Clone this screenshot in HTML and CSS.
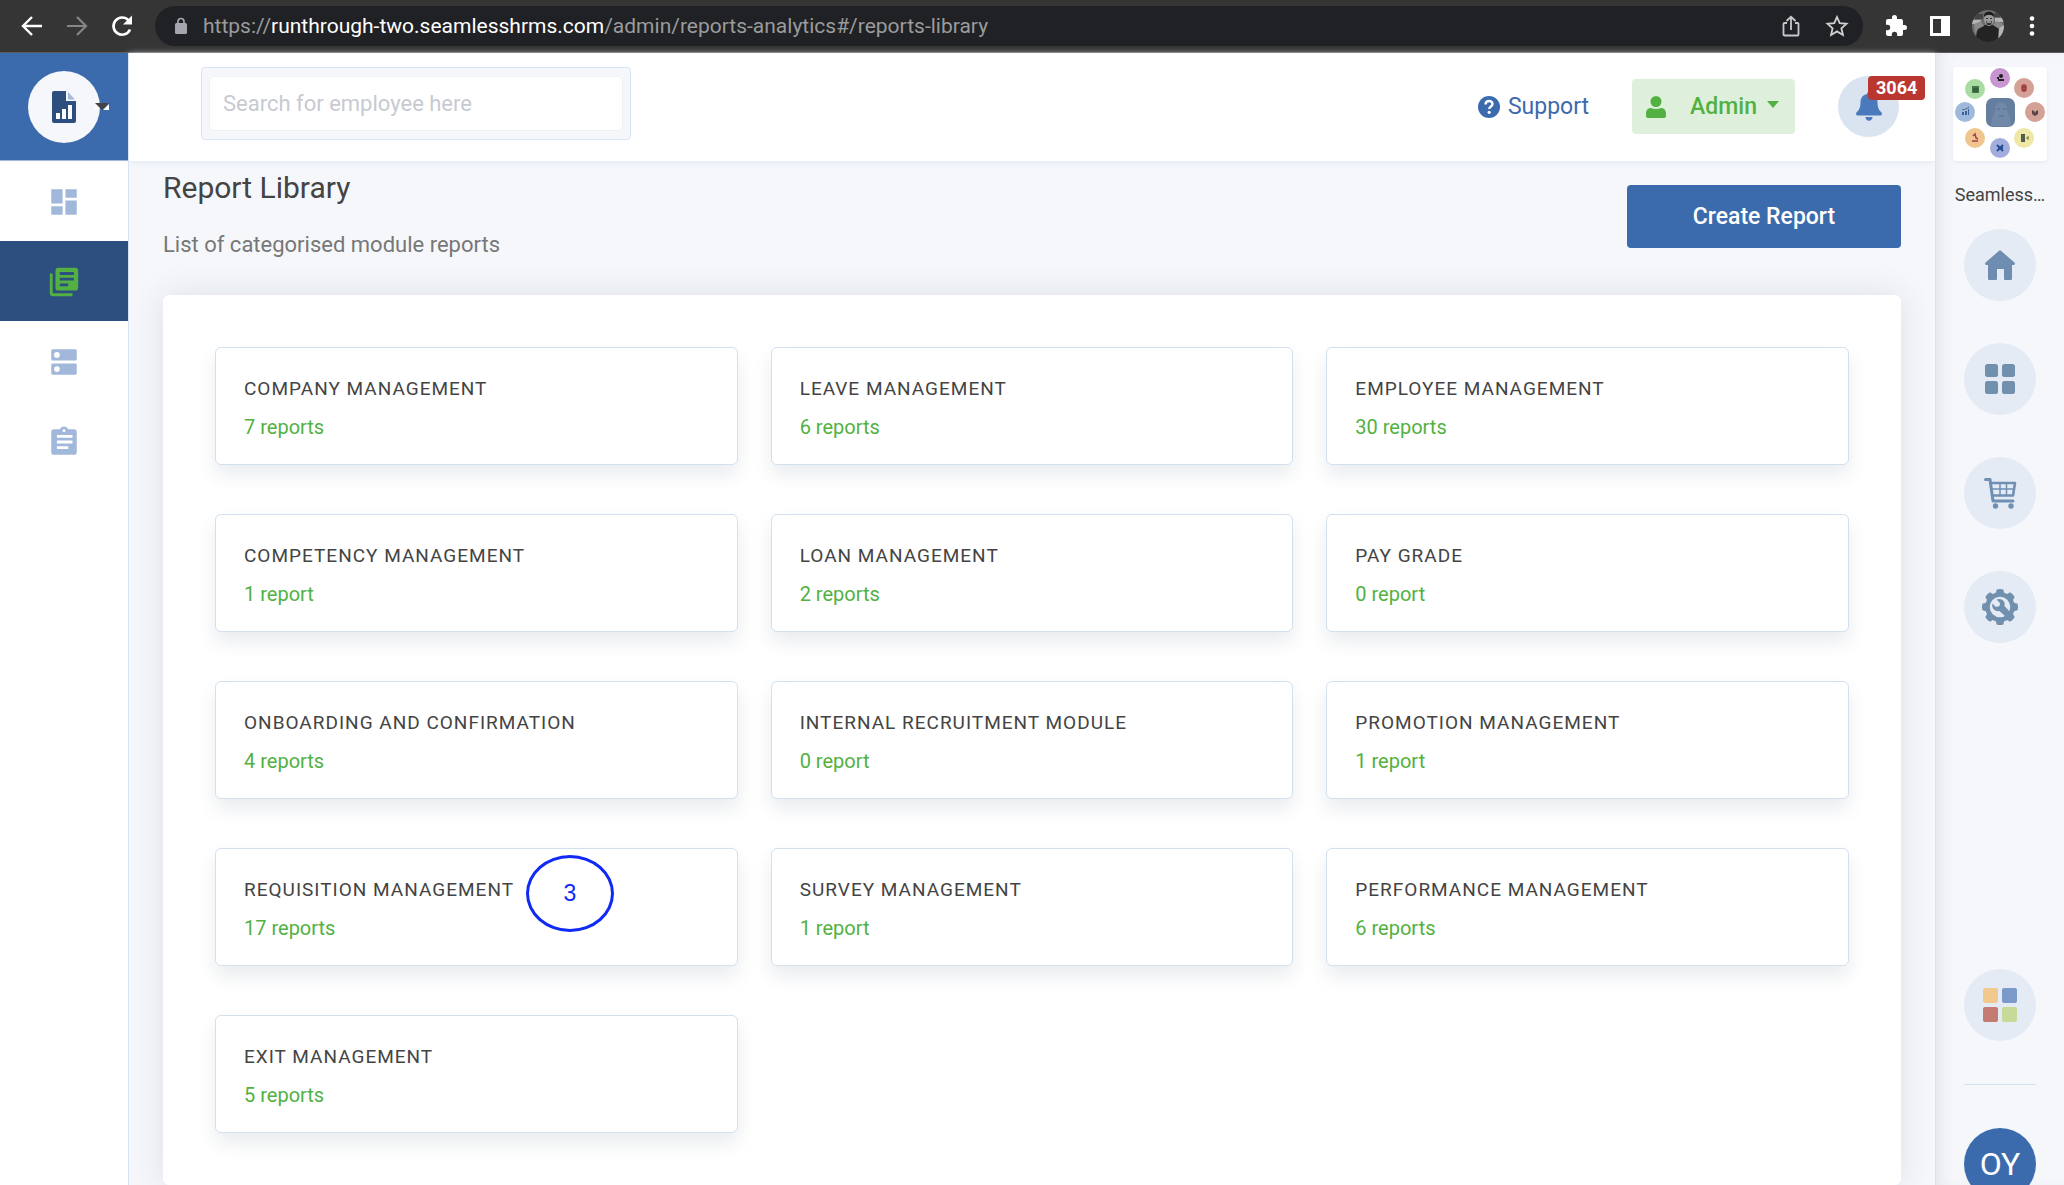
FILE: index.html
```html
<!DOCTYPE html>
<html lang="en">

	<head>
		<meta charset="utf-8">
		<title>Report Library</title>
		<link rel="stylesheet" href="styles.css">
	</head>

	<body>
		<!-- browser toolbar -->
		<div class="browser">
			<button class="nav-btn" aria-label="Back">
				<svg width="24" height="24" viewBox="0 0 24 24" fill="none" stroke="#fff" stroke-width="2.4"><path d="M22 12H4M12 3l-9 9 9 9"/></svg>
			</button>
			<button class="nav-btn" aria-label="Forward">
				<svg width="24" height="24" viewBox="0 0 24 24" fill="none" stroke="#868686" stroke-width="2.2"><path d="M2 12h18M12 3l9 9-9 9"/></svg>
			</button>
			<button class="nav-btn" aria-label="Reload">
				<svg width="24" height="24" viewBox="0 0 24 24"><path d="M20 15.5A8.6 8.6 0 1 1 18.500 6.300" fill="none" stroke="#fff" stroke-width="2.6"/><path d="M22 1.500v9h-9z" fill="#fff"/></svg>
			</button>
			<div class="omnibox">
				<svg width="14" height="18" viewBox="0 0 14 18"><rect x="1" y="6" width="12" height="11" rx="1.500" fill="#a3a7ad"/><path d="M4 7V4.500a3 3 0 0 1 6 0V7" fill="none" stroke="#a3a7ad" stroke-width="1.700"/></svg>
				<div class="url">https://<span>runthrough-two.seamlesshrms.com</span>/admin/reports-analytics#/reports-library</div>
				<button aria-label="Share">
					<svg width="22" height="24" viewBox="0 0 22 24" fill="none" stroke="#c6c8ca" stroke-width="1.800"><path d="M7 9H4.500a1 1 0 0 0-1 1v10.500a1 1 0 0 0 1 1h13a1 1 0 0 0 1-1V10a1 1 0 0 0-1-1H15M11 16V3M6.500 7L11 2.800 15.500 7"/></svg>
				</button>
				<button aria-label="Bookmark">
					<svg width="24" height="24" viewBox="0 0 24 24" fill="none" stroke="#d0d1d3" stroke-width="1.800"><path d="M12 3l2.700 6.200 6.800.6-5.100 4.500 1.500 6.600-5.900-3.500-5.900 3.500 1.500-6.600-5.100-4.500 6.800-.6z"/></svg>
				</button>
			</div>
			<button class="nav-btn" aria-label="Extensions">
				<svg width="24" height="24" viewBox="0 0 24 24" fill="#fff"><path d="M20.500 11H19V7a2 2 0 0 0-2-2h-4V3.500a2.500 2.500 0 0 0-5 0V5H4a2 2 0 0 0-2 2v3.800h1.500a2.700 2.700 0 0 1 0 5.400H2V20a2 2 0 0 0 2 2h3.800v-1.500a2.700 2.700 0 0 1 5.400 0V22H17a2 2 0 0 0 2-2v-4h1.500a2.500 2.500 0 0 0 0-5z"/></svg>
			</button>
			<button class="nav-btn" aria-label="Side panel">
				<svg width="22" height="22" viewBox="0 0 22 22"><path d="M1 1h20v20H1zM4 4v14h8V4z" fill="#fff" fill-rule="evenodd"/></svg>
			</button>
			<button class="nav-btn" aria-label="Profile">
				<svg width="32" height="32" viewBox="0 0 32 32">
					<clipPath id="face"><circle cx="16" cy="16" r="16"/></clipPath>
					<g clip-path="url(#face)">
						<path fill="#6b6b6b" d="M0 0h32v32H0z"/>
						<path fill="#b5b5b5" d="M0 10h9v4H0zM23 8h9v4h-9zM26 18l6-3v12l-6 2z"/>
						<path fill="#444" d="M3 4h8v5H3zM22 3h6v4h-6z"/>
						<path fill="#232323" d="M3 32l2-10 1-5 7-2h8l6 3-1 14z"/>
						<path fill="#8a8a8a" d="M2 14l7-3 3 5-6 3-3 5zM31 14l-6-3-4 4 6 4z"/>
						<ellipse cx="17" cy="9" rx="5" ry="7" fill="#9a9a9a"/>
						<path fill="#1b1b1b" d="M12 7c-1-7 11-7 10 0-3-3-7-3-10 0z"/>
						<path fill="#333" d="M14 8h2v1h-2zM18 8h2v1h-2zM14 11h6l-1 4h-4z"/>
						<path stroke="#eee" d="M15 12h4"/>
					</g>
				</svg>
			</button>
			<button class="nav-btn menu" aria-label="Menu">
				<svg width="6" height="20" viewBox="0 0 6 20" fill="#fff"><circle cx="3" cy="2.500" r="2.300"/><circle cx="3" cy="10" r="2.300"/><circle cx="3" cy="17.500" r="2.300"/></svg>
			</button>
		</div>

		<div class="app">
			<!-- left navigation -->
			<nav class="sidebar">
				<button class="module" aria-label="Switch module">
					<span class="module-icon">
						<svg width="24" height="32" viewBox="0 0 24 32"><path d="M2 0h12v10h10v20a2 2 0 0 1-2 2H2a2 2 0 0 1-2-2V2a2 2 0 0 1 2-2z" fill="#2c4f80"/><path d="M16 1l7 7.500h-7z" fill="#a3bbdd"/><path d="M4 22h4v6H4zM10 18h4v10h-4zM16 14h4v14h-4z" fill="#fff"/></svg>
					</span>
					<svg class="caret" width="14" height="8" viewBox="0 0 14 8"><path d="M0 7V3l4 4zM8 7h6V1z" fill="#fff"/><path d="M0 0h14L7 7z" fill="#444"/></svg>
				</button>
				<a href="#dashboard" aria-label="Dashboard">
					<svg width="34" height="34" viewBox="0 0 24 24"><path d="M3 13h8V3H3v10zm0 8h8v-6H3v6zm10 0h8V11h-8v10zm0-18v6h8V3h-8z"/></svg>
				</a>
				<a class="active" href="#reports-library" aria-label="Report library">
					<svg width="34" height="34" viewBox="0 0 24 24"><path d="M4 6H2v14a2 2 0 0 0 2 2h14v-2H4V6z"/><path fill-rule="evenodd" d="M8 2h12a2 2 0 0 1 2 2v12a2 2 0 0 1-2 2H8a2 2 0 0 1-2-2V4a2 2 0 0 1 2-2zm1 3v2h10V5zm0 4v2h10V9zm0 4v2h6v-2z"/></svg>
				</a>
				<a href="#storage" aria-label="Data sources">
					<svg width="34" height="34" viewBox="0 0 24 24"><path d="M20 13H4a1 1 0 0 0-1 1v6a1 1 0 0 0 1 1h16a1 1 0 0 0 1-1v-6a1 1 0 0 0-1-1zM7 19a2 2 0 1 1 0-4 2 2 0 0 1 0 4zM20 3H4a1 1 0 0 0-1 1v6a1 1 0 0 0 1 1h16a1 1 0 0 0 1-1V4a1 1 0 0 0-1-1zM7 9a2 2 0 1 1 0-4 2 2 0 0 1 0 4z"/></svg>
				</a>
				<a href="#tasks" aria-label="Assignments">
					<svg width="34" height="34" viewBox="0 0 24 24"><path d="M19 3h-4.180a3 3 0 0 0-5.640 0H5a2 2 0 0 0-2 2v14a2 2 0 0 0 2 2h14a2 2 0 0 0 2-2V5a2 2 0 0 0-2-2zm-7 0a1 1 0 1 1 0 2 1 1 0 0 1 0-2zm3 14H7v-2h8v2zm3-4H7v-2h11v2zm0-4H7V7h11v2z"/></svg>
				</a>
			</nav>

			<div class="main">
				<header class="topbar">
					<div class="search">
						<input type="text" placeholder="Search for employee here" aria-label="Search for employee">
					</div>
					<a class="support" href="#support">
						<svg width="22" height="22" viewBox="0 0 22 22"><circle cx="11" cy="11" r="11" fill="#3c6bad"/><path d="M7.500 8.500c.3-4.600 7-4.400 7-.5 0 2.500-3.300 2.500-3.300 5" fill="none" stroke="#fff" stroke-width="2.400"/><circle cx="11.200" cy="16.300" r="1.600" fill="#fff"/></svg>
						Support
					</a>
					<button class="admin">
						<svg width="20" height="22" viewBox="0 0 20 22" fill="#52b141"><circle cx="10" cy="5.500" r="5.500"/><path d="M0 18c0-4 2-6 5-6 3 1.300 7 1.300 10 0 3 0 5 2 5 6v2a2 2 0 0 1-2 2H2a2 2 0 0 1-2-2z"/></svg>
						<span>Admin</span>
						<svg width="12" height="11" viewBox="0 0 12 11" fill="#52b141"><path d="M0 0h12L6 7z"/></svg>
					</button>
					<button class="bell" aria-label="Notifications">
						<svg width="26" height="29" viewBox="0 0 26 29" fill="#4a7abb"><path d="M13 0c1.200 0 2 .8 2 2 4 .9 6.500 4 6.500 8 0 6 1.500 8 4 10.500.9 1.200.3 3-1.500 3H2c-1.800 0-2.400-1.800-1.500-3C3 18 4.500 16 4.500 10c0-4 2.500-7.100 6.500-8 0-1.200.8-2 2-2zM9.500 25h7c0 5-7 5-7 0z"/></svg>
						<span class="badge">3064</span>
					</button>
				</header>

				<main class="content">
					<div class="page-head">
						<div>
							<h1>Report Library</h1>
							<p>List of categorised module reports</p>
						</div>
						<button class="create">Create Report</button>
					</div>
					<div class="panel">
						<a class="card" href="#company"><h2>COMPANY MANAGEMENT</h2><p>7 reports</p></a>
						<a class="card" href="#leave"><h2>LEAVE MANAGEMENT</h2><p>6 reports</p></a>
						<a class="card" href="#employee"><h2>EMPLOYEE MANAGEMENT</h2><p>30 reports</p></a>
						<a class="card" href="#competency"><h2>COMPETENCY MANAGEMENT</h2><p>1 report</p></a>
						<a class="card" href="#loan"><h2>LOAN MANAGEMENT</h2><p>2 reports</p></a>
						<a class="card" href="#paygrade"><h2>PAY GRADE</h2><p>0 report</p></a>
						<a class="card" href="#onboarding"><h2>ONBOARDING AND CONFIRMATION</h2><p>4 reports</p></a>
						<a class="card" href="#recruitment"><h2>INTERNAL RECRUITMENT MODULE</h2><p>0 report</p></a>
						<a class="card" href="#promotion"><h2>PROMOTION MANAGEMENT</h2><p>1 report</p></a>
						<a class="card" href="#requisition"><h2>REQUISITION MANAGEMENT</h2><p>17 reports</p><span class="marker">3</span></a>
						<a class="card" href="#survey"><h2>SURVEY MANAGEMENT</h2><p>1 report</p></a>
						<a class="card" href="#performance"><h2>PERFORMANCE MANAGEMENT</h2><p>6 reports</p></a>
						<a class="card" href="#exit"><h2>EXIT MANAGEMENT</h2><p>5 reports</p></a>
					</div>
				</main>
			</div>

			<!-- right rail -->
			<aside class="rail">
				<svg class="company-logo" width="94" height="94" viewBox="0 0 94 94">
					<rect x="33" y="31" width="29" height="29" rx="7" fill="#657d9f"/>
					<path d="M38 59c0-10 4-12 4-17 0-9 12-9 12 0 0 5 4 7 4 17z" fill="#7288a8"/>
					<path d="M44 42h3m3 0h3m-7 7h5" stroke="#506a8e"/>
					<circle cx="47" cy="11" r="10" fill="#c795d0"/>
					<circle cx="71" cy="21" r="10" fill="#d3a195"/>
					<circle cx="82" cy="45" r="10" fill="#d3a195"/>
					<circle cx="71" cy="71" r="10" fill="#efe7a5"/>
					<circle cx="47" cy="81" r="10" fill="#a3addd"/>
					<circle cx="22" cy="71" r="10" fill="#f1c68e"/>
					<circle cx="12" cy="45" r="10" fill="#9eb9dc"/>
					<circle cx="22" cy="22" r="10" fill="#a9dba3"/>
					<circle cx="48" cy="9" r="2" fill="#222"/><path d="M45 14v-2h6v2zM44 10h2v2h-2z" fill="#222"/>
					<ellipse cx="71" cy="21" rx="3" ry="4" fill="#b4494c"/><path d="M69 20h4m-4 3h4" stroke="#704040"/>
					<path d="M79 43l3 2 3-2v4l-3 2-3-2z" fill="#4b4448"/><path d="M80 46h3" stroke="#b94545"/>
					<path d="M68 67h4v8h-4z" fill="#525d4a"/><path d="M73 71h3m-1-2v4" stroke="#8a7b43"/>
					<path d="M44 78l6 6m0-6l-6 6m1-3h5" stroke="#244e91" stroke-width="2"/>
					<path d="M20 69l2-2 1 4 2 1m-6 2h6" stroke="#a33d53" stroke-width="1.500" fill="none"/>
					<path d="M9 48v-3h2v3zm3 0v-4h2v4zm3 0v-6h1v6z" fill="#3b6298"/><path d="M9 43l4-1 3-2" stroke="#56677c" fill="none"/>
					<path d="M19 19h7v7h-7z" fill="#427948"/><path d="M20 22h5m-5 2h5" stroke="#284b36"/>
				</svg>
				<div class="company">Seamless…</div>
				<div class="rail-links">
					<a class="round" href="#home" aria-label="Home">
						<svg width="32" height="32" viewBox="0 0 32 32" fill="#6f8db0"><path d="M16 1l14.500 12.500c1 1.500 0 2.500-1.500 2.500h-1v13.500c0 1-.6 1.500-1.500 1.500H21a1 1 0 0 1-1-1V20h-7v10a1 1 0 0 1-1 1H5.500C4.600 31 4 30.500 4 29.500V16H3c-1.500 0-2.500-1-1.500-2.500z"/></svg>
					</a>
					<a class="round" href="#apps" aria-label="Apps">
						<svg width="32" height="32" viewBox="0 0 32 32" fill="#7190ae"><rect x="1" y="1" width="13" height="13" rx="2.500"/><rect x="18" y="1" width="13" height="13" rx="2.500"/><rect x="1" y="18" width="13" height="13" rx="2.500"/><rect x="18" y="18" width="13" height="13" rx="2.500"/></svg>
					</a>
					<a class="round" href="#shop" aria-label="Marketplace">
						<svg width="34" height="32" viewBox="0 0 34 32" fill="none" stroke="#6f8fb3" stroke-linecap="round" stroke-linejoin="round"><path stroke-width="3" d="M2.500 2.500H7l3 21.500h20"/><path stroke-width="2.600" d="M8 6h24l-2 12.500H10"/><path stroke-width="1.500" d="M9 12h22M17 6v12M23.500 6v12"/><g fill="#6f8fb3" stroke="none"><circle cx="12.500" cy="29" r="2.700"/><circle cx="28" cy="29" r="2.700"/></g></svg>
					</a>
					<a class="round" href="#settings" aria-label="Settings">
						<svg width="36" height="36" viewBox="-18 -18 36 36">
							<circle r="12.500" fill="none" stroke="#7190ae" stroke-width="4.500"/>
							<path id="tooth" d="M-4.500-13l1.200-4.500q3.300-1 6.600 0L4.500-13z" fill="#7190ae"/>
							<g fill="#7190ae"><use href="#tooth" transform="rotate(45)"/><use href="#tooth" transform="rotate(90)"/><use href="#tooth" transform="rotate(135)"/><use href="#tooth" transform="rotate(180)"/><use href="#tooth" transform="rotate(225)"/><use href="#tooth" transform="rotate(270)"/><use href="#tooth" transform="rotate(315)"/></g>
							<path d="M-3.500-7.500C1-9.500 6-6 4.500-1L10 5 6 10-.5 4C-5 5-9 1-7.500-3.500L-4 0l3.500-1L0-4z" fill="#7190ae"/>
						</svg>
					</a>
				</div>
				<div class="rail-foot">
					<a class="round" href="#products" aria-label="Products">
						<svg width="34" height="34" viewBox="0 0 34 34"><rect width="15" height="15" rx="2" fill="#f1c98f"/><rect x="19" width="15" height="15" rx="2" fill="#7b9aca"/><rect y="19" width="15" height="15" rx="2" fill="#c47b73"/><rect x="19" y="19" width="15" height="15" rx="2" fill="#c8da97"/></svg>
					</a>
					<hr>
					<button class="round avatar">OY</button>
				</div>
			</aside>
		</div>
	</body>

</html>
```

FILE: styles.css
```css
* {
	box-sizing: border-box;
}
body {
	margin: 0;
	height: 100vh;
	overflow: hidden;
	display: flex;
	flex-direction: column;
	font-family: Roboto, "Liberation Sans", sans-serif;
	font-size: 20px;
	color: #444;
	background: #f5f7fb;
}
button {
	font-family: inherit;
	border: 0;
	padding: 0;
	background: none;
	cursor: pointer;
}
a {
	color: inherit;
	text-decoration: none;
}
h1, h2, p {
	margin: 0;
	font-weight: 400;
}
svg {
	display: block;
	flex: none;
}

/* browser toolbar */
.browser {
	flex: none;
	display: flex;
	align-items: center;
	gap: 21px;
	height: 53px;
	padding: 0 25px 0 20px;
	background: #353535;
	border-bottom: 1px solid #5c5c5c;
}
.menu {
	padding: 0 4px;
}
.omnibox {
	flex: 1;
	display: flex;
	align-items: center;
	gap: 23px;
	height: 40px;
	padding: 0 14px 0 19px;
	border-radius: 20px;
	background: #202124;
}
.url {
	flex: 1;
	margin-left: -8px;
	font-size: 21px;
	white-space: nowrap;
	color: #9a9b9d;
}
.url span {
	color: #fff;
}

.app {
	flex: 1;
	min-height: 0;
	display: flex;
}

/* left navigation */
.sidebar {
	flex: none;
	width: 129px;
	background: #fff;
	border-right: 1px solid #d9e4f3;
}
.sidebar a {
	display: flex;
	align-items: center;
	justify-content: center;
	height: 80px;
	padding-top: 2px;
}
.sidebar a svg {
	fill: #a1b8da;
}
.sidebar a.active {
	background: #2c4f80;
}
.sidebar a.active svg {
	fill: #52b141;
}
.module {
	position: relative;
	display: flex;
	align-items: center;
	justify-content: center;
	width: 100%;
	height: 108px;
	background: #3c6bad;
	border-bottom: 1px solid #a1b8da;
}
.module-icon {
	display: flex;
	align-items: center;
	justify-content: center;
	width: 72px;
	height: 72px;
	border-radius: 50%;
	background: #f5f7fb;
}
.caret {
	position: absolute;
	right: 19px;
	top: 50px;
}

/* header */
.main {
	flex: 1;
	min-width: 0;
	display: flex;
	flex-direction: column;
}
.topbar {
	flex: none;
	display: flex;
	align-items: center;
	height: 108px;
	padding: 0 36px 1px 72px;
	background: #fff;
	box-shadow: 0 1px 6px #dfe6f0;
}
.search {
	width: 430px;
	margin: 0 auto 6px 0;
	padding: 8px 7px;
	background: #f5f7fb;
	border: 1px solid #d9e4f3;
	border-radius: 4px;
}
.search input {
	width: 100%;
	height: 55px;
	padding: 0 13px;
	font-family: inherit;
	font-size: 22px;
	background: #fff;
	border: 1px solid #f0f1f4;
	border-radius: 5px;
}
.search input::placeholder {
	color: #c7cad1;
}
.support {
	display: flex;
	align-items: center;
	gap: 8px;
	margin-right: 43px;
	font-size: 23px;
	color: #3c6bad;
}
.admin {
	display: flex;
	align-items: center;
	height: 55px;
	margin-right: 43px;
	padding: 0 16px 0 14px;
	font-size: 23px;
	font-weight: 500;
	color: #52b141;
	background: #def0dc;
	border-radius: 4px;
}
.admin span {
	margin: 0 10px 0 24px;
}
.bell {
	position: relative;
	display: flex;
	align-items: center;
	justify-content: center;
	width: 61px;
	height: 61px;
	border-radius: 50%;
	background: #dae4f0;
}
.badge {
	position: absolute;
	top: 0;
	left: 30px;
	padding: 0 8px;
	font-size: 18px;
	font-weight: 700;
	line-height: 24px;
	color: #fff;
	background: #ba372f;
	border-radius: 4px;
}

/* report library */
.content {
	flex: 1;
	min-height: 0;
	display: flex;
	flex-direction: column;
	padding: 0 34px;
}
.page-head {
	flex: none;
	display: flex;
	justify-content: space-between;
	height: 134px;
	padding-top: 8px;
}
h1 {
	font-size: 30px;
	line-height: 38px;
}
.page-head p {
	margin-top: 22px;
	font-size: 22px;
	line-height: 32px;
	color: #777;
}
.create {
	width: 274px;
	height: 63px;
	margin-top: 16px;
	font-size: 23px;
	font-weight: 500;
	color: #fff;
	background: #3c6bad;
	border-radius: 4px;
}
.panel {
	flex: 1;
	display: grid;
	grid-template-columns: repeat(3, 1fr);
	align-content: start;
	gap: 49px 33px;
	padding: 52px;
	background: #fff;
	border-radius: 6px;
	box-shadow: 0 0 32px #dcdfe6;
}
.card {
	position: relative;
	height: 118px;
	padding: 27px 28px;
	background: #fff;
	border: 1px solid #d3e0f0;
	border-radius: 6px;
	box-shadow: 0 10px 20px #e9ebee;
}
.card h2 {
	font-size: 19px;
	line-height: 28px;
	letter-spacing: 1px;
}
.card p {
	margin-top: 12px;
	font-size: 20px;
	line-height: 24px;
	color: #52b141;
}
/* numbered callout over a card */
.marker {
	position: absolute;
	left: 310px;
	top: 6px;
	width: 88px;
	height: 77px;
	border: 3px solid #102af5;
	border-radius: 50%;
	font-family: "Liberation Sans", sans-serif;
	font-size: 23px;
	line-height: 71px;
	text-align: center;
	color: #102af5;
}

/* right rail */
.rail {
	flex: none;
	display: flex;
	flex-direction: column;
	align-items: center;
	width: 129px;
	padding-top: 14px;
	border-left: 1px solid #d9e4f3;
	box-shadow: inset 12px 0 16px -8px #e2e4e9;
}
.company-logo {
	background: #fff;
	border-radius: 4px;
	box-shadow: 0 2px 4px #e6ecf5;
}
.company {
	margin-top: 22px;
	font-size: 18px;
	line-height: 24px;
}
.rail-links {
	display: flex;
	flex-direction: column;
	gap: 42px;
	margin-top: 22px;
}
.round {
	display: flex;
	align-items: center;
	justify-content: center;
	width: 72px;
	height: 72px;
	border-radius: 50%;
	background: #e4ebf5;
}
.rail-foot {
	margin-top: auto;
	margin-bottom: -15px;
}
.rail-foot hr {
	margin: 43px 0;
	border: 0;
	border-top: 1px solid #d3e0ef;
}
.rail-foot .avatar {
	font-size: 32px;
	color: #fff;
	background: #3c6bad;
}
```
